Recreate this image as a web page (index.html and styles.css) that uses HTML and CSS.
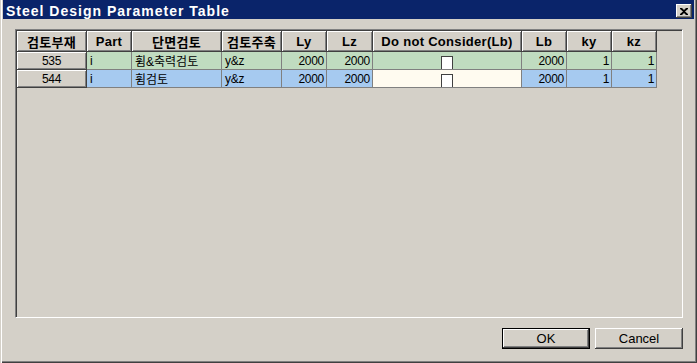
FILE: index.html
```html
<!DOCTYPE html>
<html lang="ko">
<head>
    <meta charset="UTF-8">
    <title>Steel Design Parameter Table</title>
    <link rel="stylesheet" href="styles.css">
</head>
<body>
<div class="window">
    <div class="titlebar">
        <span class="title">Steel Design Parameter Table</span>
        <span class="close-btn">
            <svg width="8" height="7" viewBox="0 0 8 7"><path d="M0 0h2l2 2 2-2h2v1L5 3.5 8 6v1H6L4 5 2 7H0V6l3-2.5L0 1z" fill="#000"/></svg>
        </span>
    </div>
    <div class="content">
        <div class="grid-box">
            <table class="grid">
                <colgroup>
                    <col style="width:70px"><col style="width:45px"><col style="width:90px"><col style="width:60px">
                    <col style="width:45px"><col style="width:46px"><col style="width:149px"><col style="width:45px">
                    <col style="width:45px"><col style="width:45px">
                </colgroup>
                <tr>
                    <th>검토부재</th><th>Part</th><th>단면검토</th><th>검토주축</th><th>Ly</th><th>Lz</th>
                    <th>Do not Consider(Lb)</th><th>Lb</th><th>ky</th><th>kz</th>
                </tr>
                <tr class="row-green">
                    <td class="rowhead">535</td><td>i</td><td class="kr">휨&amp;축력검토</td><td>y&amp;z</td>
                    <td class="num">2000</td><td class="num">2000</td>
                    <td class="check-cell"><span class="check"></span></td>
                    <td class="num">2000</td><td class="num">1</td><td class="num">1</td>
                </tr>
                <tr class="row-blue">
                    <td class="rowhead">544</td><td>i</td><td class="kr">휨검토</td><td>y&amp;z</td>
                    <td class="num">2000</td><td class="num">2000</td>
                    <td class="check-cell cream"><span class="check"></span></td>
                    <td class="num">2000</td><td class="num">1</td><td class="num">1</td>
                </tr>
            </table>
        </div>
        <div class="buttons">
            <button class="btn default-btn">OK</button>
            <button class="btn">Cancel</button>
        </div>
    </div>
</div>
</body>
</html>
```

FILE: styles.css
```css
body {margin: 0; background: #d4d0c8; font-family: "Liberation Sans", "Noto Sans CJK KR", sans-serif; font-size: 12px; color: #000;}

/* window frame */
.window {width: 697px; height: 363px; box-sizing: border-box; padding: 0 3px 2px 3px; display: flex; flex-direction: column;
    box-shadow: inset 1px 0 #d4d0c8, inset 2px 0 #fff, inset -1px -1px #404040, inset -2px -2px #808080;}
.titlebar {height: 19px; box-sizing: border-box; padding: 3px 2px 0 3px; background: #0a246a; color: #fff;
    display: flex; align-items: center; justify-content: space-between;}
.title {font-weight: bold; font-size: 14px; line-height: 16px; letter-spacing: 1px;}
.close-btn {width: 16px; height: 14px; box-sizing: border-box; background: #d4d0c8; display: flex; align-items: center; justify-content: center;
    box-shadow: inset -1px -1px #404040, inset 1px 1px #fff, inset -2px -2px #808080;}

.content {flex: 1; padding: 10px 11px 0 12px;}

/* sunken grid area */
.grid-box {height: 289px; box-sizing: border-box; padding: 1px; border: 1px solid; border-color: #808080 #fff #fff #808080;
    box-shadow: inset 1px 1px #404040, inset -1px -1px #d4d0c8;}

/* grid styles */
.grid {border-collapse: separate; border-spacing: 0; table-layout: fixed; width: 640px;}
.grid th {height: 20px; padding: 0; background: #d4d0c8; font-size: 13px; font-weight: bold; letter-spacing: 0.3px; text-align: center; white-space: nowrap;
    border-right: 1px solid #404040; border-bottom: 1px solid #404040; box-shadow: inset 1px 1px #fff, inset -1px -1px #808080;}
.grid td {height: 17px; padding: 0 2px 0 3px; border-right: 1px solid #808080; border-bottom: 1px solid #808080; white-space: nowrap; overflow: hidden;
    letter-spacing: -0.3px;}
.grid td.rowhead {background: #d4d0c8; text-align: center; padding: 0; border-right-color: #404040; border-bottom-color: #404040;
    box-shadow: inset 1px 1px #fff, inset -1px -1px #808080;}
.grid td.kr {letter-spacing: 0;}
.grid td.num {text-align: right; padding-right: 2px;}
.row-green td {background: #c0dcc0;}
.row-blue td {background: #a6caf0;}
.grid td.cream {background: #fffbf0;}
.grid td.check-cell {text-align: center; vertical-align: bottom; padding: 0;}
.check {display: block; width: 12px; height: 13px; margin: 0 auto; background: #fff; border: 1px solid #404040; border-bottom: none; box-sizing: border-box;}

/* buttons */
.buttons {display: flex; justify-content: flex-end; gap: 5px; margin-top: 10px;}
.btn {width: 88px; height: 21px; box-sizing: border-box; border: none; background: #d4d0c8; font-family: "Liberation Sans", sans-serif; font-size: 13px; color: #000; padding: 0;
    box-shadow: inset -1px -1px #404040, inset 1px 1px #fff, inset -2px -2px #808080;}
.default-btn {border: 1px solid #000;}
```
